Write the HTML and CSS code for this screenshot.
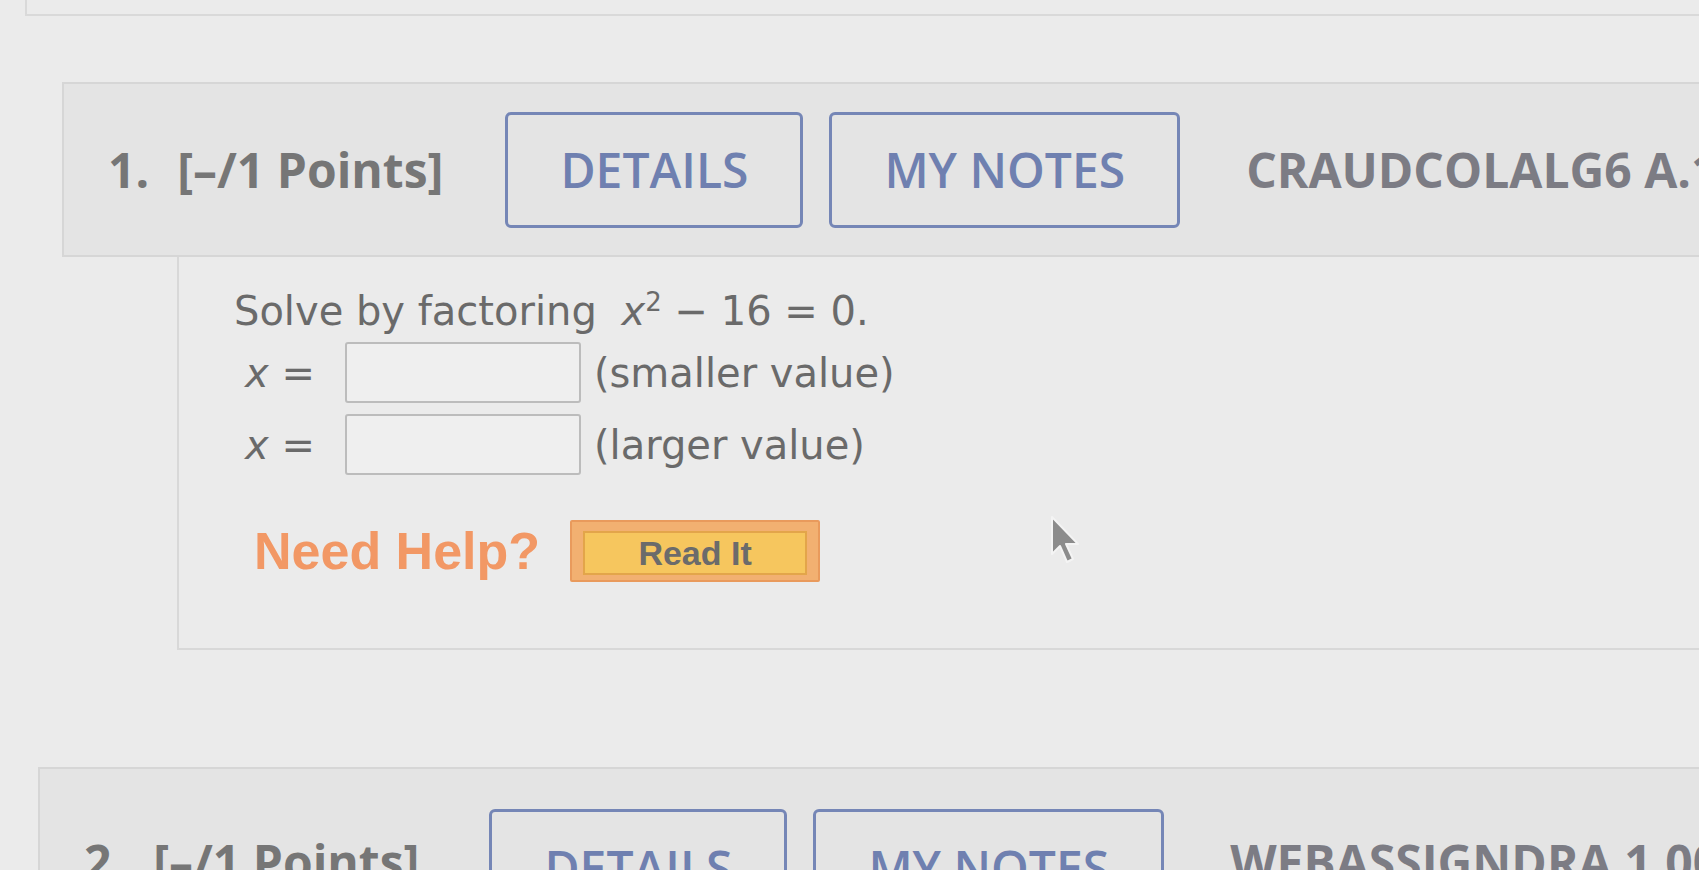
FILE: index.html
```html
<!DOCTYPE html>
<html lang="en">
<head>
  <meta charset="UTF-8">
  <title>Assignment</title>
  <link rel="stylesheet" href="styles.css">
</head>
<body>
  <div class="page">
    <div class="prev-panel"></div>

    <section class="question q1">
      <div class="q-head">
        <span class="q-num">1.</span>
        <span class="q-points">[&ndash;/1 Points]</span>
        <button class="tab">DETAILS</button>
        <button class="tab">MY NOTES</button>
        <span class="q-code">CRAUDCOLALG6 A.1.001.</span>
      </div>
      <div class="q-body">
        <p class="prompt">Solve by factoring <span class="math"><i>x</i><sup>2</sup> &minus; 16 = 0</span>.</p>
        <div class="answer-row">
          <span class="math"><i>x</i> =</span>
          <input type="text" class="answer">
          <span>(smaller value)</span>
        </div>
        <div class="answer-row">
          <span class="math"><i>x</i> =</span>
          <input type="text" class="answer">
          <span>(larger value)</span>
        </div>
        <div class="help">
          <span class="need-help">Need Help?</span>
          <button class="read-it"><span>Read It</span></button>
        </div>
      </div>
    </section>

    <section class="question q2">
      <div class="q-head">
        <span class="q-num">2.</span>
        <span class="q-points">[&ndash;/1 Points]</span>
        <button class="tab">DETAILS</button>
        <button class="tab">MY NOTES</button>
        <span class="q-code">WEBASSIGNDRA 1.001.</span>
      </div>
    </section>

    <!-- mouse pointer -->
    <svg class="cursor" width="30" height="50" viewBox="0 0 30 50">
      <path d="M2 2 L2 39 L10 31 L17 47 L23 44 L16 29 L28 29 Z" fill="#8c8c8c" stroke="#f4f4f4" stroke-width="2" stroke-linejoin="round"/>
    </svg>
  </div>
</body>
</html>
```

FILE: styles.css
```css
body {
  margin: 0;
  background-color: #ebebeb;
  font-family: "Open Sans", sans-serif;
  overflow: hidden;
}
.page {
  position: relative;
  width: 1699px;
  height: 870px;
  overflow: hidden;
}
.prev-panel {
  margin-left: 25px;
  height: 14px;
  border-left: 2px solid #d9d9d9;
  border-bottom: 2px solid #d9d9d9;
}
.question {
  margin-top: 66px;
  margin-left: 62px;
}
.q2 {
  margin-top: 117px;
  margin-left: 38px;
}
.q-head {
  display: flex;
  align-items: center;
  height: 171px;
  padding-left: 44px;
  background-color: #e4e4e4;
  border: 2px solid #d6d6d6;
  border-right: none;
  white-space: nowrap;
  overflow: hidden;
  font-size: 48px;
  font-weight: 700;
  color: #767676;
}
.q2 .q-head {
  align-items: flex-start;
  padding-top: 40px;
  height: 140px;
}
.q2 .q-head .q-num,
.q2 .q-head .q-points,
.q2 .q-head .q-code {
  margin-top: 20px;
}
.q2 .q-points {
  margin-right: 70px;
}
.q-num {
  margin-right: 28px;
}
.q-points {
  margin-right: 62px;
}
.tab {
  height: 116px;
  padding: 0 52px;
  margin-right: 26px;
  background-color: transparent;
  border: 3px solid #7586b6;
  border-radius: 6px;
  font-family: "Open Sans", sans-serif;
  font-size: 48px;
  font-weight: 600;
  color: #6f80b0;
}
.tab + .tab {
  margin-right: 66px;
}
.q-code {
  color: #7c7c84;
}
.q-body {
  margin-left: 115px;
  padding: 30px 0 66px 55px;
  border-left: 2px solid #d8d8d8;
  border-bottom: 2px solid #d8d8d8;
  font-family: "DejaVu Sans", sans-serif;
  font-size: 40px;
  color: #6a6a6a;
}
.prompt {
  margin: 0 0 7px;
  line-height: 48px;
}
.prompt .math {
  margin-left: 12px;
}
.math i {
  font-style: italic;
}
.math sup {
  font-size: 26px;
  line-height: 0;
}
.answer-row {
  display: flex;
  align-items: center;
  gap: 13px;
  margin-bottom: 11px;
}
.answer-row .math {
  margin-left: 11px;
  margin-right: 17px;
}
.answer {
  width: 232px;
  height: 57px;
  padding: 0;
  border: 2px solid #bcbcbc;
  border-radius: 3px;
  background-color: #efefef;
}
.help {
  display: flex;
  align-items: center;
  gap: 30px;
  margin-top: 45px;
}
.need-help {
  margin-left: 20px;
  font-family: "Liberation Sans", sans-serif;
  font-weight: 700;
  font-size: 52px;
  color: #f29865;
}
.read-it {
  width: 250px;
  height: 62px;
  padding: 9px 11px;
  background-color: #f2b071;
  border: 2px solid #e99a5c;
  border-radius: 2px;
}
.read-it span {
  display: flex;
  align-items: center;
  justify-content: center;
  height: 100%;
  background-color: #f6c65e;
  border: 2px solid #e3a54a;
  font-family: "Liberation Sans", sans-serif;
  font-weight: 700;
  font-size: 34px;
  color: #6b6b6b;
}
.cursor {
  position: absolute;
  left: 1050px;
  top: 515px;
}
```
